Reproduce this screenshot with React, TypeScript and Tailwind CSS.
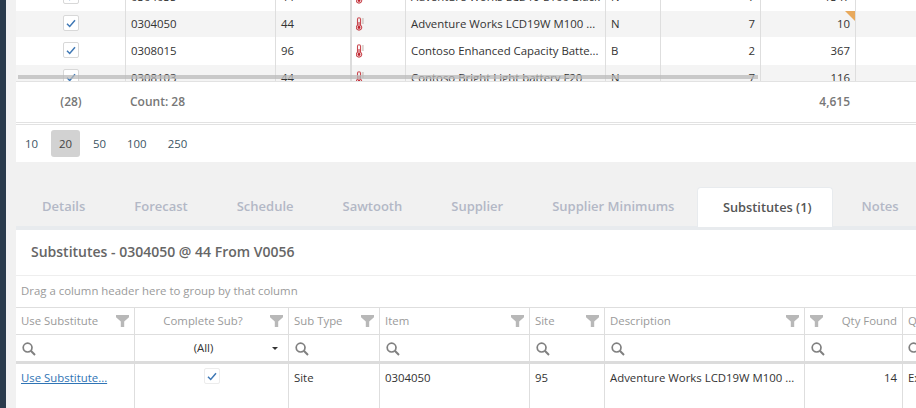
import React from "react";

// Column widths for the two grids
const TOP_COLS = "grid-cols-[110px_150px_76px_54px_200px_55px_100px_95px_60px]";
const SUB_COLS = "grid-cols-[119px_154px_91px_150px_75px_200px_98px_13px]";

const topRows = [
  { h: "h-[28px]", bg: "bg-white", item: "0304035", site: "44", desc: "Adventure Works LCD19 E100 Black", t: "N", lead: "7", qty: "1347" },
  { h: "h-[26px]", bg: "bg-[#f4f4f4]", item: "0304050", site: "44", desc: "Adventure Works LCD19W M100 ...", t: "N", lead: "7", qty: "10", flag: true },
  { h: "h-[28px]", bg: "bg-white", item: "0308015", site: "96", desc: "Contoso Enhanced Capacity Batte...", t: "B", lead: "2", qty: "367" },
  { h: "h-[26px]", bg: "bg-[#f4f4f4]", item: "0308103", site: "44", desc: "Contoso Bright Light battery F20", t: "N", lead: "7", qty: "116" },
];

const tabs = ["Details", "Forecast", "Schedule", "Sawtooth", "Supplier", "Supplier Minimums"];

function Check({ light }: { light?: boolean }) {
  return (
    <span className={`flex h-[16px] w-[16px] items-center justify-center rounded-[2px] border bg-white ${light ? "border-[#ececec]" : "border-[#d8d8d8]"}`}>
      <svg width="10" height="9" viewBox="0 0 10 9" fill="none">
        <path d="M1 4.8 3.7 7.5 9 1.2" stroke="#3f78b5" strokeWidth="1.5" />
      </svg>
    </span>
  );
}

function Thermometer() {
  return (
    <svg width="8" height="14" viewBox="0 0 8 14" fill="none">
      <path d="M1.5 8.2V2.2a1.5 1.5 0 0 1 3 0v6a2.7 2.7 0 1 1-3 0Z" stroke="#c9484f" strokeWidth="1.1" />
      <circle cx="3" cy="10.5" r="1.4" fill="#c0202c" />
      <path d="M3 5v5" stroke="#c0202c" strokeWidth="1" />
      <path d="M5.8 2h2M5.8 4h2M5.8 6h2" stroke="#b9a9a0" strokeWidth="1" />
    </svg>
  );
}

function Funnel() {
  return (
    <svg width="13" height="12" viewBox="0 0 13 12" className="shrink-0">
      <path d="M0 0h13v2.2L8.2 6.4V12H4.8V6.4L0 2.2Z" fill="#b8b8b8" />
    </svg>
  );
}

function SearchIcon() {
  return (
    <svg width="14" height="14" viewBox="0 0 14 14" fill="none" className="shrink-0">
      <circle cx="5.6" cy="5.6" r="4.4" stroke="#808080" strokeWidth="1.7" />
      <path d="M8.8 8.8 13 13" stroke="#808080" strokeWidth="2" />
    </svg>
  );
}

function HeadCell({ label, align, flip }: { label: string; align?: string; flip?: boolean }) {
  return (
    <div className="flex items-center gap-1 border-r border-[#dedede] px-[5px]">
      {flip && <Funnel />}
      <span className={`flex-1 truncate text-[#9a9a9a] ${align ?? ""}`}>{label}</span>
      {!flip && label && <Funnel />}
    </div>
  );
}

function FilterCell() {
  return (
    <div className="flex items-center border-r border-[#dedede] pl-[6px] pt-[1px]">
      <SearchIcon />
    </div>
  );
}

export default function App() {
  return (
    <div className="flex h-[408px] w-[916px] overflow-hidden bg-[#f1f1f1] font-['Open_Sans',sans-serif] text-[11.4px] text-[#333]">
      <div className="w-[6px] shrink-0 bg-[#2a3b4c]" />
      <div className="ml-[10px] flex min-w-0 flex-1 flex-col">
        {/* Top grid, scrolled so the rows are cut off */}
        <div className="relative h-[81px] shrink-0 overflow-hidden bg-white">
          <div className="-mt-[17px]">
            {topRows.map((r) => (
              <div key={r.item} className={`grid ${TOP_COLS} ${r.h} ${r.bg}`}>
                <div className="flex items-center justify-center border-r border-[#dedede] pb-[2px]">
                  <Check />
                </div>
                <div className="flex items-center border-r border-[#dedede] pl-[5px]">{r.item}</div>
                <div className="flex items-center border-r-2 border-[#dcdcdc] pl-[5px]">{r.site}</div>
                <div className="flex items-center border-r border-[#dedede] pl-[4px]">
                  <Thermometer />
                </div>
                <div className="flex items-center overflow-hidden whitespace-nowrap border-r border-[#dedede] pl-[5px]">{r.desc}</div>
                <div className="flex items-center border-r border-[#dedede] pl-[5px]">{r.t}</div>
                <div className="flex items-center justify-end border-r border-[#dedede] pr-[5px]">{r.lead}</div>
                <div className="relative flex items-center justify-end border-r border-[#dedede] pr-[5px]">
                  {r.qty}
                  {r.flag && <span className="absolute right-0 top-0 h-0 w-0 border-l-[10px] border-t-[10px] border-l-transparent border-t-[#e8a95c]" />}
                </div>
                <div />
              </div>
            ))}
          </div>
          {/* Overlay scrollbar */}
          <div className="absolute left-[2px] top-[75px] h-[4px] w-[740px] bg-[#bbbbbb]/75" />
        </div>

        {/* Totals */}
        <div className={`grid ${TOP_COLS} h-[42px] shrink-0 items-center border-y border-[#e2e2e2] bg-white text-[12px] font-semibold text-[#777]`}>
          <div className="text-center">(28)</div>
          <div className="pl-[4px]">Count: 28</div>
          <div /><div /><div /><div /><div />
          <div className="pr-[6px] text-right">4,615</div>
          <div />
        </div>
        <div className="h-px shrink-0 bg-white" />

        {/* Pager */}
        <div className="flex h-[38px] shrink-0 items-center gap-[5px] border-t border-[#e2e2e2] bg-white pl-[1px]">
          {["10", "20", "50", "100", "250"].map((p) => (
            <span key={p} className={`flex h-[27px] items-center rounded-[3px] px-[8px] text-[#3b5563] ${p === "20" ? "bg-[#d2d2d2] text-[#444]" : ""}`}>
              {p}
            </span>
          ))}
        </div>

        {/* Tabs */}
        <div className="mt-[25px] flex h-[43px] shrink-0 whitespace-nowrap border-b-[4px] border-[#e8ebee] text-[13px] font-semibold text-[#b3b8c6]">
          {tabs.map((t) => (
            <div key={t} className="flex shrink-0 items-center px-[24.5px] first:pl-[26px]">
              {t}
            </div>
          ))}
          <div className="-mb-[1px] -ml-[2px] flex shrink-0 items-center rounded-t-[4px] border border-b-0 border-[#e8ebee] bg-white pl-[25px] pr-[20px] text-[12.8px] text-[#555]">
            Substitutes (1)
          </div>
          <div className="flex shrink-0 items-center pl-[29px]">Notes</div>
        </div>

        {/* Substitutes panel */}
        <div className="flex min-h-0 flex-1 flex-col bg-white">
          <div className="flex h-[46px] shrink-0 items-center border-b border-[#eeeeee] pb-[2px] pl-[15px] text-[14px] font-semibold text-[#666]">
            Substitutes - 0304050 @ 44 From V0056
          </div>
          <div className="flex h-[32px] shrink-0 items-center border-b border-[#dedede] pb-[1px] pl-[5px] text-[#9a9a9a]">
            Drag a column header here to group by that column
          </div>
          <div className={`grid ${SUB_COLS} h-[27px] shrink-0 border-b border-[#dedede]`}>
            <HeadCell label="Use Substitute" />
            <HeadCell label="Complete Sub?" align="text-center" />
            <HeadCell label="Sub Type" />
            <HeadCell label="Item" />
            <HeadCell label="Site" />
            <HeadCell label="Description" />
            <HeadCell label="Qty Found" align="text-right" flip />
            <div className="flex items-center pl-[5px] text-[#9a9a9a]">Q</div>
          </div>
          <div className={`grid ${SUB_COLS} h-[29px] shrink-0 border-b-[3px] border-[#dcdcdc]`}>
            <FilterCell />
            <div className="flex items-center justify-center border-r border-[#dedede] pr-[10px]">
              <span className="flex-1 text-center">(All)</span>
              <span className="h-0 w-0 border-x-[3px] border-t-[3px] border-x-transparent border-t-[#333]" />
            </div>
            <FilterCell />
            <FilterCell />
            <FilterCell />
            <FilterCell />
            <FilterCell />
            <div className="flex items-center overflow-hidden pl-[5px] pt-[1px]"><SearchIcon /></div>
          </div>
          <div className={`grid ${SUB_COLS} flex-1`}>
            <div className="border-r border-[#dedede] pl-[5px] pt-[5px] text-[#2f74b5] underline">Use Substitute...</div>
            <div className="flex justify-center border-r border-[#dedede] pt-[4px]"><div className="h-fit"><Check light /></div></div>
            <div className="border-r border-[#dedede] pl-[5px] pt-[5px]">Site</div>
            <div className="border-r border-[#dedede] pl-[5px] pt-[5px]">0304050</div>
            <div className="border-r border-[#dedede] pl-[5px] pt-[5px]">95</div>
            <div className="truncate border-r border-[#dedede] pl-[5px] pt-[5px]">Adventure Works LCD19W M100 ...</div>
            <div className="border-r border-[#dedede] pr-[5px] pt-[5px] text-right">14</div>
            <div className="overflow-hidden pl-[5px] pt-[5px]">Ex</div>
          </div>
        </div>
      </div>
    </div>
  );
}
